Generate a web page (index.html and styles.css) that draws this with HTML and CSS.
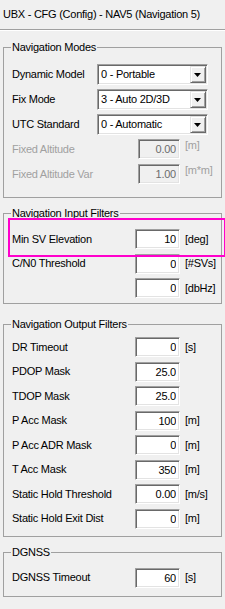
FILE: index.html
```html
<!DOCTYPE html>
<html>

<head>
    <meta charset="utf-8">
    <meta name="viewport" content="width=device-width">
    <title>UBX - CFG (Config) - NAV5 (Navigation 5)</title>
    <link rel="stylesheet" href="styles.css">
</head>

<body>
    <div class="title">UBX - CFG (Config) - NAV5 (Navigation 5)</div>
    <div class="sep"></div>

    <fieldset class="group modes">
        <legend>Navigation Modes</legend>
        <div class="row">
            <label class="wide">Dynamic Model</label>
            <div class="combo"><span>0 - Portable</span><i class="drop"></i></div>
        </div>
        <div class="row">
            <label class="wide">Fix Mode</label>
            <div class="combo"><span>3 - Auto 2D/3D</span><i class="drop"></i></div>
        </div>
        <div class="row">
            <label class="wide">UTC Standard</label>
            <div class="combo"><span>0 - Automatic</span><i class="drop"></i></div>
        </div>
        <div class="row off">
            <label class="short">Fixed Altitude</label>
            <input class="num narrow" type="text" value="0.00" disabled>
            <span class="unit">[m]</span>
        </div>
        <div class="row off">
            <label class="short">Fixed Altitude Var</label>
            <input class="num narrow" type="text" value="1.00" disabled>
            <span class="unit">[m*m]</span>
        </div>
    </fieldset>

    <fieldset class="group inputs">
        <legend>Navigation Input Filters</legend>
        <div class="row marked">
            <label>Min SV Elevation</label>
            <input class="num" type="text" value="10">
            <span class="unit">[deg]</span>
        </div>
        <div class="row">
            <label>C/N0 Threshold</label>
            <input class="num" type="text" value="0">
            <span class="unit">[#SVs]</span>
        </div>
        <div class="row">
            <label></label>
            <input class="num" type="text" value="0">
            <span class="unit">[dbHz]</span>
        </div>
    </fieldset>

    <fieldset class="group outputs">
        <legend>Navigation Output Filters</legend>
        <div class="row">
            <label>DR Timeout</label>
            <input class="num" type="text" value="0">
            <span class="unit">[s]</span>
        </div>
        <div class="row">
            <label>PDOP Mask</label>
            <input class="num" type="text" value="25.0">
        </div>
        <div class="row">
            <label>TDOP Mask</label>
            <input class="num" type="text" value="25.0">
        </div>
        <div class="row">
            <label>P Acc Mask</label>
            <input class="num" type="text" value="100">
            <span class="unit">[m]</span>
        </div>
        <div class="row">
            <label>P Acc ADR Mask</label>
            <input class="num" type="text" value="0">
            <span class="unit">[m]</span>
        </div>
        <div class="row">
            <label>T Acc Mask</label>
            <input class="num" type="text" value="350">
            <span class="unit">[m]</span>
        </div>
        <div class="row">
            <label>Static Hold Threshold</label>
            <input class="num" type="text" value="0.00">
            <span class="unit">[m/s]</span>
        </div>
        <div class="row">
            <label>Static Hold Exit Dist</label>
            <input class="num" type="text" value="0">
            <span class="unit">[m]</span>
        </div>
    </fieldset>

    <fieldset class="group dgnss">
        <legend>DGNSS</legend>
        <div class="row">
            <label>DGNSS Timeout</label>
            <input class="num" type="text" value="60">
            <span class="unit">[s]</span>
        </div>
    </fieldset>
</body>

</html>
```

FILE: styles.css
```css
* {
    margin: 0;
    padding: 0;
    box-sizing: border-box;
}

body {
    background: #f0f0f0;
    color: #000;
    font-family: "Liberation Sans", Arial, sans-serif;
    font-size: 11px;
    line-height: 13px;
    letter-spacing: -0.25px;
}

.title {
    height: 29px;
    padding: 8px 0 0 3px;
    white-space: nowrap;
}

.sep {
    height: 2px;
    border-top: 1px solid #a0a0a0;
    border-bottom: 1px solid #fff;
}

.group {
    margin: 9px 3px 0 3px;
    padding: 9px 0 8px 8px;
    border: 1px solid #a0a0a0;
    min-width: 0;
}

.group legend {
    padding: 0 1px;
    margin-left: -1px;
}

.modes {
    margin-top: 10px;
    padding-top: 10px;
    padding-bottom: 12px;
}

.inputs {
    padding-bottom: 5px;
}

.outputs {
    margin-top: 14px;
    padding-top: 6px;
    padding-bottom: 7px;
}

.row {
    display: flex;
    align-items: center;
    height: 20px;
}

.row + .row {
    margin-top: 4.5px;
}

.modes .row {
    height: 21px;
    align-items: flex-start;
}

.modes .row + .row {
    margin-top: 4px;
}

.modes .row label {
    line-height: 21px;
}

.row label {
    width: 123px;
    flex: none;
    white-space: nowrap;
}

.row label.wide {
    width: 85px;
}

.row label.short {
    width: 126px;
}

.off label,
.off .unit {
    color: #a0a0a0;
}

.num {
    width: 45px;
    height: 20px;
    flex: none;
    padding: 0 3px;
    font: inherit;
    letter-spacing: inherit;
    text-align: right;
    color: #000;
    background: #fff;
    border: 1px solid;
    border-color: #a0a0a0 #fff #fff #a0a0a0;
    box-shadow: inset 1px 1px 0 #696969, inset -1px -1px 0 #e3e3e3;
    outline: none;
}

.num.narrow {
    width: 42px;
}

.num:disabled {
    background: #f0f0f0;
    color: #6d6d6d;
}

.unit {
    margin-left: 5px;
    white-space: nowrap;
}

.combo {
    width: 111px;
    height: 21px;
    display: flex;
    align-items: center;
    padding: 0 1px 0 3px;
    background: #fff;
    border: 1px solid;
    border-color: #a0a0a0 #fff #fff #a0a0a0;
    box-shadow: inset 1px 1px 0 #696969, inset -1px -1px 0 #e3e3e3;
}

.combo span {
    flex: 1;
    white-space: nowrap;
}

.drop {
    position: relative;
    width: 16px;
    height: 17px;
    background: #f0f0f0;
    border: 1px solid;
    border-color: #e3e3e3 #696969 #696969 #e3e3e3;
    box-shadow: inset 1px 1px 0 #fff, inset -1px -1px 0 #a0a0a0;
}

.drop::after {
    content: "";
    position: absolute;
    left: 3px;
    top: 6px;
    width: 7px;
    height: 4px;
    background: #000;
    clip-path: polygon(0 0, 100% 0, 50% 100%);
}

/* highlight frame drawn over the first input-filter row */
.marked {
    position: relative;
}

.marked::after {
    content: "";
    position: absolute;
    left: -4px;
    top: -11px;
    width: 214px;
    height: 35px;
    border: 2px solid #f0c;
}
```
